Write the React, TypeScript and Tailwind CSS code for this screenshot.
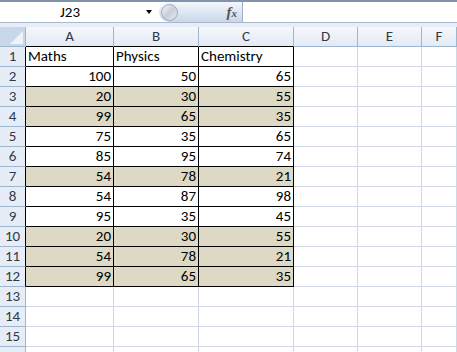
import React from "react";

const cols = ["A", "B", "C", "D", "E", "F"];

// beige rows in the data block
const shaded = new Set([3, 4, 7, 10, 11, 12]);

const data: (string | number)[][] = [
  ["Maths", "Physics", "Chemistry"],
  [100, 50, 65],
  [20, 30, 55],
  [99, 65, 35],
  [75, 35, 65],
  [85, 95, 74],
  [54, 78, 21],
  [54, 87, 98],
  [95, 35, 45],
  [20, 30, 55],
  [54, 78, 21],
  [99, 65, 35],
];

function FormulaBar() {
  return (
    <div className="flex h-[23px] border-t-2 border-b border-t-[#7f93ad] border-b-[#a9b8cc] bg-white">
      <div className="relative flex w-[159px] items-center">
        <span className="w-[140px] text-center text-[15px] text-black">J23</span>
        <span className="absolute left-[146px] top-[8px] h-0 w-0 border-x-[3.5px] border-t-[4px] border-x-transparent border-t-black" />
      </div>
      <div className="flex w-[84px] items-center justify-between rounded-l-full border-r border-[#9fb1c8] bg-gradient-to-b from-[#f4f7fb] via-[#dfe7f2] to-[#c9d6e8] pl-[2px] pr-[5px]">
        <span className="h-[17px] w-[17px] rounded-full border border-[#9aa9bd] bg-gradient-to-br from-[#f7f9fc] via-[#c7ced8] to-[#e8edf3]" />
        <span
          className="text-[15px] font-bold italic text-[#555]"
          style={{ fontFamily: '"Liberation Serif", serif' }}
        >
          f<span className="text-[11px]">x</span>
        </span>
      </div>
      <div className="flex-1 bg-white" />
    </div>
  );
}

function ColHeader({ label, dark }: { label: string; dark: boolean }) {
  return (
    <div
      className={`flex h-[20px] items-center justify-center border-r border-b border-r-[#9eb6ce] bg-gradient-to-b from-[#f5f8fc] to-[#e3eaf4] text-[15px] text-[#2f3a48] ${
        dark ? "border-b-black" : "border-b-[#9eb6ce]"
      }`}
    >
      {label}
    </div>
  );
}

function RowHeader({ n, show }: { n: number; show: boolean }) {
  const inBlock = n >= 1 && n <= 12;
  return (
    <div
      className={`flex h-[20px] items-center justify-center border-r border-b border-b-[#9eb6ce] bg-[#e6edf7] text-[15px] text-[#2f3a48] ${
        inBlock ? "border-r-black" : "border-r-[#9eb6ce]"
      }`}
    >
      {show ? n : ""}
    </div>
  );
}

function Cell({ row, col }: { row: number; col: number }) {
  const inBlock = row >= 1 && row <= 12 && col < 3;
  const value = inBlock ? data[row - 1][col] : "";
  const isNum = typeof value === "number";
  const bg = inBlock && shaded.has(row) ? "bg-[#ddd9c4]" : "bg-white";
  return (
    <div
      className={`flex h-[20px] items-end overflow-hidden whitespace-nowrap border-r border-b pb-[1px] text-[15px] leading-[18px] text-black ${bg} ${
        inBlock ? "border-r-black border-b-black" : "border-r-[#d0d7e5] border-b-[#d0d7e5]"
      } ${isNum ? "justify-end pr-[2px]" : "justify-start pl-[2px]"}`}
    >
      {value}
    </div>
  );
}

export default function App() {
  const rows = Array.from({ length: 16 }, (_, i) => i + 1);
  return (
    <div
      className="h-[352px] w-[457px] overflow-hidden bg-white"
      style={{ fontFamily: 'Carlito, Calibri, "Liberation Sans", sans-serif' }}
    >
      <FormulaBar />
      <div className="h-[4px] bg-[#e9eef6]" />
      <div className="grid grid-cols-[26px_88px_85px_95px_64px_64px_1fr]">
        <div className="relative h-[20px] border-r border-b border-[#9eb6ce] bg-[#c9d7ea]">
          <span className="absolute bottom-[2px] right-[2px] h-0 w-0 border-b-[13px] border-l-[13px] border-b-[#eef3f9] border-l-transparent" />
        </div>
        {cols.map((c, i) => (
          <ColHeader key={c} label={c} dark={i < 3} />
        ))}
        {rows.map((r) => (
          <React.Fragment key={r}>
            <RowHeader n={r} show={r <= 15} />
            {cols.map((c, i) => (
              <Cell key={c} row={r} col={i} />
            ))}
          </React.Fragment>
        ))}
      </div>
    </div>
  );
}
